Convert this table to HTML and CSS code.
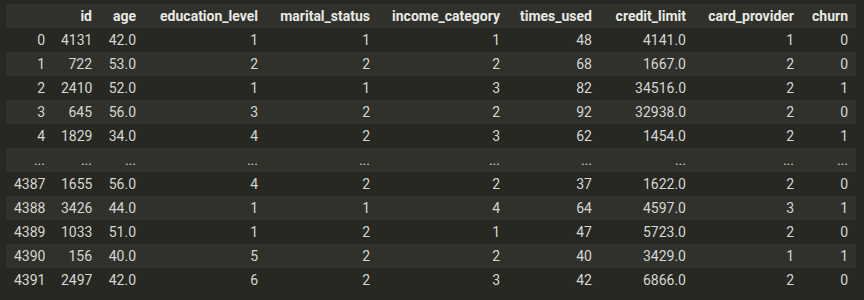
FILE: index.html
```html
<!DOCTYPE html>
<html>
<head>
<meta charset="utf-8">
<link rel="stylesheet" href="styles.css">
</head>
<body>
<table class="df">
<colgroup>
<col class="c-idx"><col class="c-id"><col class="c-age"><col class="c-edu"><col class="c-mar"><col class="c-inc"><col class="c-times"><col class="c-credit"><col class="c-card"><col class="c-churn">
</colgroup>
<thead>
<tr><th></th><th>id</th><th>age</th><th>education_level</th><th>marital_status</th><th>income_category</th><th>times_used</th><th>credit_limit</th><th>card_provider</th><th>churn</th></tr>
</thead>
<tbody>
<tr><th>0</th><td>4131</td><td>42.0</td><td>1</td><td>1</td><td>1</td><td>48</td><td>4141.0</td><td>1</td><td>0</td></tr>
<tr><th>1</th><td>722</td><td>53.0</td><td>2</td><td>2</td><td>2</td><td>68</td><td>1667.0</td><td>2</td><td>0</td></tr>
<tr><th>2</th><td>2410</td><td>52.0</td><td>1</td><td>1</td><td>3</td><td>82</td><td>34516.0</td><td>2</td><td>1</td></tr>
<tr><th>3</th><td>645</td><td>56.0</td><td>3</td><td>2</td><td>2</td><td>92</td><td>32938.0</td><td>2</td><td>0</td></tr>
<tr><th>4</th><td>1829</td><td>34.0</td><td>4</td><td>2</td><td>3</td><td>62</td><td>1454.0</td><td>2</td><td>1</td></tr>
<tr><th>...</th><td>...</td><td>...</td><td>...</td><td>...</td><td>...</td><td>...</td><td>...</td><td>...</td><td>...</td></tr>
<tr><th>4387</th><td>1655</td><td>56.0</td><td>4</td><td>2</td><td>2</td><td>37</td><td>1622.0</td><td>2</td><td>0</td></tr>
<tr><th>4388</th><td>3426</td><td>44.0</td><td>1</td><td>1</td><td>4</td><td>64</td><td>4597.0</td><td>3</td><td>1</td></tr>
<tr><th>4389</th><td>1033</td><td>51.0</td><td>1</td><td>2</td><td>1</td><td>47</td><td>5723.0</td><td>2</td><td>0</td></tr>
<tr><th>4390</th><td>156</td><td>40.0</td><td>5</td><td>2</td><td>2</td><td>40</td><td>3429.0</td><td>1</td><td>1</td></tr>
<tr><th>4391</th><td>2497</td><td>42.0</td><td>6</td><td>2</td><td>3</td><td>42</td><td>6866.0</td><td>2</td><td>0</td></tr>
</tbody>
</table>
</body>
</html>
```
FILE: styles.css
```css
html, body {
  margin: 0;
  background: #272822;
}
body {
  padding: 4px 6px;
  font-family: Roboto, "Noto Sans", sans-serif;
  font-size: 14px;
  color: #d6d6d2;
}
.df {
  border-collapse: collapse;
  table-layout: fixed;
  width: 850px;
}
.c-idx { width: 47px; }
.c-id { width: 47px; }
.c-age { width: 44px; }
.c-edu { width: 122px; }
.c-mar { width: 112px; }
.c-inc { width: 130px; }
.c-times { width: 92px; }
.c-credit { width: 94px; }
.c-card { width: 108px; }
.c-churn { width: 54px; }
.df th, .df td {
  height: 24px;
  padding: 0 8px;
  text-align: right;
  vertical-align: middle;
  white-space: nowrap;
  line-height: 24px;
}
.df thead th {
  font-weight: bold;
  color: #e8e8e4;
  background: #30312b;
}
.df tbody th {
  font-weight: normal;
  color: #d6d6d2;
}
.df tbody tr:nth-child(even) {
  background: #30312b;
}
```
